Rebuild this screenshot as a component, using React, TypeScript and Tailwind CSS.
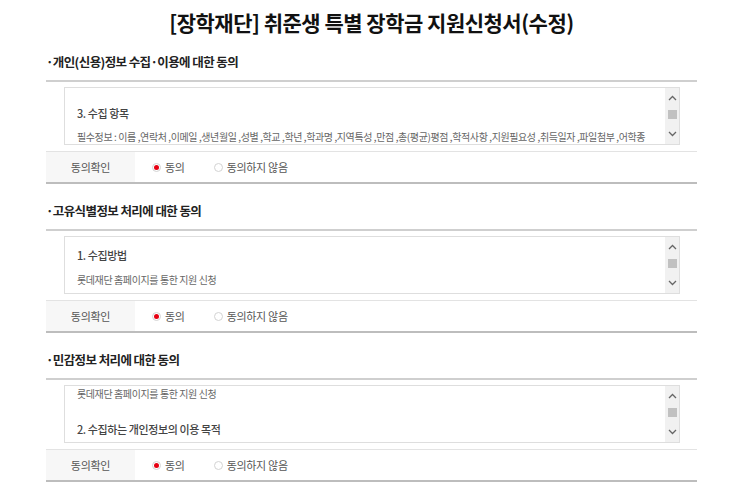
import React from 'react'

const font = { fontFamily: '"Noto Sans CJK KR", "Noto Sans", sans-serif' }

function Radio({ checked, label }: { checked: boolean; label: string }) {
  return (
    <label className="flex items-center gap-[4px]">
      <span className="flex h-[9px] w-[9px] items-center justify-center rounded-full border border-[#d3d3d3] bg-white">
        {checked && <span className="h-[5px] w-[5px] rounded-full bg-[#e60012]"></span>}
      </span>
      <span className="text-[11px] leading-[14px] tracking-[-0.3px] text-[#555]">{label}</span>
    </label>
  )
}

function ScrollBar() {
  return (
    <div className="flex w-[14px] flex-col items-center bg-[#f1f1f1] py-[5px]">
      <svg width="9" height="6" viewBox="0 0 9 6" className="mt-[2px]">
        <path d="M1 5 L4.5 1.5 L8 5" fill="none" stroke="#666" strokeWidth="1.3" />
      </svg>
      <div className="mt-[9px] h-[9px] w-[9px] bg-[#c1c1c1]"></div>
      <svg width="9" height="6" viewBox="0 0 9 6" className="mt-auto mb-[2px]">
        <path d="M1 1 L4.5 4.5 L8 1" fill="none" stroke="#666" strokeWidth="1.3" />
      </svg>
    </div>
  )
}

function Section({ title, children }: { title: string; children: React.ReactNode }) {
  return (
    <section>
      <h2 className="h-[35px] text-[12.5px] leading-[33px] font-bold tracking-[-0.6px] text-[#222]">{title}</h2>
      <div className="border-t-2 border-[#cfcfcf] pt-[5px] pb-[6px]">
        <div className="mr-[17px] ml-[18px] flex h-[58px] border border-[#dedede]">
          <div className="flex-1 overflow-hidden pl-[12px]">{children}</div>
          <ScrollBar />
        </div>
      </div>
      <div className="flex h-[33px] border-t border-[#e3e3e3] border-b-2 border-b-[#bdbdbd]">
        <div className="flex w-[89px] items-center justify-center bg-[#f7f7f7] text-[11px] tracking-[-0.3px] text-[#555]">동의확인</div>
        <div className="flex items-center gap-[29px] pl-[17px]">
          <Radio checked label="동의" />
          <Radio checked={false} label="동의하지 않음" />
        </div>
      </div>
    </section>
  )
}

export default function App() {
  return (
    <div className="min-h-[495px] bg-white" style={font}>
      <div className="mx-auto w-[651px]">
        <h1 className="flex h-[45px] items-center justify-center text-[21px] font-bold tracking-[-0.5px] text-[#111]">
          [장학재단] 취준생 특별 장학금 지원신청서(수정)
        </h1>
        <div className="space-y-[10px]">
          <Section title="·개인(신용)정보 수집·이용에 대한 동의">
            <p className="pt-[17px] text-[11px] leading-[16px] font-medium tracking-[-0.4px] text-[#444]">3. 수집 항목</p>
            <p className="mt-[9px] whitespace-nowrap text-[10px] leading-[14px] tracking-[-0.4px] text-[#666]">
              필수정보 : 이름 ,연락처 ,이메일 ,생년월일 ,성별 ,학교 ,학년 ,학과명 ,지역특성 ,만점 ,총(평균)평점 ,학적사항 ,지원필요성 ,취득일자 ,파일첨부 ,어학종
            </p>
          </Section>
          <Section title="·고유식별정보 처리에 대한 동의">
            <p className="pt-[10px] text-[11px] leading-[16px] font-medium tracking-[-0.4px] text-[#444]">1. 수집방법</p>
            <p className="mt-[10px] text-[10px] leading-[14px] tracking-[-0.4px] text-[#666]">롯데재단 홈페이지를 통한 지원 신청</p>
          </Section>
          <Section title="·민감정보 처리에 대한 동의">
            <p className="pt-[1px] text-[10px] leading-[13px] tracking-[-0.4px] text-[#666]">롯데재단 홈페이지를 통한 지원 신청</p>
            <p className="mt-[21px] text-[11px] leading-[16px] font-medium tracking-[-0.4px] text-[#444]">2. 수집하는 개인정보의 이용 목적</p>
          </Section>
        </div>
      </div>
    </div>
  )
}
